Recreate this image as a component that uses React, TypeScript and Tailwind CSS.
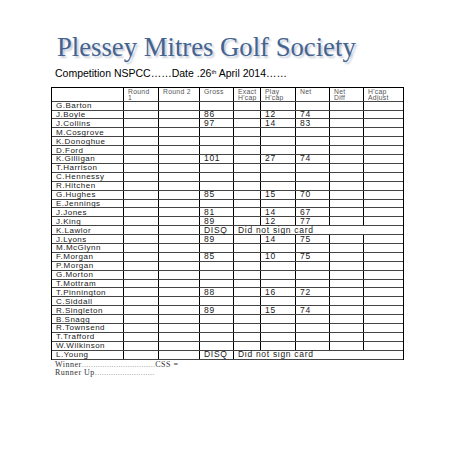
const cols = "grid grid-cols-[72px_35px_41px_34px_27px_35px_34px_34px_41px]"

type Row = { name: string; gross?: string; play?: string; net?: string; note?: string }

const rows: Row[] = [
  { name: "G.Barton" },
  { name: "J.Boyle", gross: "86", play: "12", net: "74" },
  { name: "J.Collins", gross: "97", play: "14", net: "83" },
  { name: "M.Cosgrove" },
  { name: "K.Donoghue" },
  { name: "D.Ford" },
  { name: "K.Gilligan", gross: "101", play: "27", net: "74" },
  { name: "T.Harrison" },
  { name: "C.Hennessy" },
  { name: "R.Hitchen" },
  { name: "G.Hughes", gross: "85", play: "15", net: "70" },
  { name: "E.Jennings" },
  { name: "J.Jones", gross: "81", play: "14", net: "67" },
  { name: "J.King", gross: "89", play: "12", net: "77" },
  { name: "K.Lawlor", gross: "DISQ", note: "Did not sign card" },
  { name: "J.Lyons", gross: "89", play: "14", net: "75" },
  { name: "M.McGlynn" },
  { name: "F.Morgan", gross: "85", play: "10", net: "75" },
  { name: "P.Morgan" },
  { name: "G.Morton" },
  { name: "T.Mottram" },
  { name: "T.Pinnington", gross: "88", play: "16", net: "72" },
  { name: "C.Siddall" },
  { name: "R.Singleton", gross: "89", play: "15", net: "74" },
  { name: "B.Snagg" },
  { name: "R.Townsend" },
  { name: "T.Trafford" },
  { name: "W.Wilkinson" },
  { name: "L.Young", gross: "DISQ", note: "Did not sign card" },
]

const headers: [string, string?][] = [
  ["Round", "1"],
  ["Round 2"],
  ["Gross"],
  ["Exact", "H'cap"],
  ["Play", "H'cap"],
  ["Net"],
  ["Net", "Diff"],
  ["H'cap", "Adjust"],
]

function Cell({ children, last }: { children?: React.ReactNode; last?: boolean }) {
  return (
    <div className={`flex items-center pl-[4px] text-[8.5px] tracking-[0.7px] leading-[7px] whitespace-nowrap ${last ? "" : "border-r border-black"}`}>
      {children}
    </div>
  )
}

export default function App() {
  return (
    <div className="w-[453px] h-[453px] bg-white pl-[51px] pt-[34px] font-['Liberation_Sans',Arial,sans-serif] text-[#1a1a1a]">
      <h1 className="pl-[6px] text-[26.7px] leading-none font-['Liberation_Serif','Times_New_Roman',serif] text-[#44648f] [text-shadow:2px_2px_2px_#c3c9d6]">
        Plessey Mitres Golf Society
      </h1>

      <p className="mt-[7px] pl-[4px] text-[10.5px] leading-none text-black">
        Competition NSPCC……Date .26<sup className="text-[6px]">th</sup> April 2014……
      </p>

      <div className="mt-[9px] w-[353px] border-l border-r border-t border-black">
        <div className={`${cols} h-[13.5px] border-b border-[#444]`}>
          <div className="border-r border-black" />
          {headers.map(([a, b], i) => (
            <div
              key={i}
              className={`pl-[4px] pt-[1px] text-[6.8px] tracking-[0.3px] leading-[6px] text-[#555] ${i === headers.length - 1 ? "" : "border-r border-black"}`}
            >
              {a}
              {b && <br />}
              {b}
            </div>
          ))}
        </div>

        {rows.map((r) => (
          <div key={r.name} className={`${cols} h-[8.9px] border-b border-[#444]`}>
            <div className="flex items-center pl-[4px] text-[8px] tracking-[0.5px] leading-[7px] whitespace-nowrap border-r border-black">
              {r.name}
            </div>
            <Cell />
            <Cell />
            <Cell>{r.gross}</Cell>
            {r.note ? (
              <div className="col-span-5 flex items-center pl-[4px] text-[8.5px] tracking-[0.7px] leading-[7px] whitespace-nowrap">
                {r.note}
              </div>
            ) : (
              <>
                <Cell />
                <Cell>{r.play}</Cell>
                <Cell>{r.net}</Cell>
                <Cell />
                <Cell last />
              </>
            )}
          </div>
        ))}
      </div>

      <div className="pl-[4px] pt-[1px] text-[8px] tracking-[0.5px] leading-[8px] font-['Liberation_Serif','Times_New_Roman',serif] text-[#333]">
        <p>
          Winner<span className="text-[#888] tracking-[0.3px]">................................</span>CSS =
        </p>
        <p>
          Runner Up<span className="text-[#888] tracking-[0.3px]">..........................</span>
        </p>
      </div>
    </div>
  )
}
